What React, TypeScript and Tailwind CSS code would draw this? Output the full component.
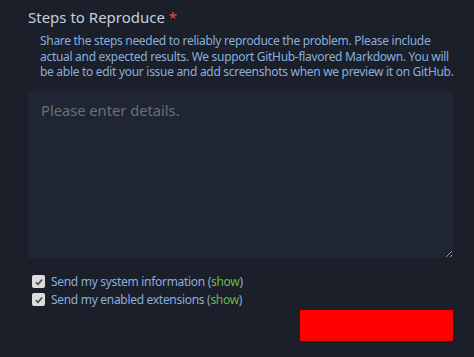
import React from "react";

const Check: React.FC = () => (
  <span className="flex h-[13px] w-[13px] items-center justify-center rounded-[2px] bg-[#dcdcdc]">
    <svg viewBox="0 0 12 12" className="h-[10px] w-[10px]">
      <path d="M2.2 6.3 L4.8 8.8 L9.8 3" fill="none" stroke="#4a4a4a" strokeWidth="2" />
    </svg>
  </span>
);

const App: React.FC = () => {
  return (
    <div className="h-[357px] w-[474px] bg-[#1b1f2a] font-['Noto_Sans',sans-serif]">
      <div className="pl-[28px] pr-[21px] pt-[6px]">
        <h2 className="text-[15px] leading-[22px] text-[#c5cfdf]">
          Steps to Reproduce <span className="text-[#e5484d]">*</span>
        </h2>
        <p className="mr-[-12px] mt-[5px] pl-[12px] text-[12px] leading-[15.5px] tracking-[-0.3px] text-[#8aaede]">
          Share the steps needed to reliably reproduce the problem. Please include actual and expected
          results. We support GitHub-flavored Markdown. You will be able to edit your issue and add
          screenshots when we preview it on GitHub.
        </p>
        <textarea
          className="mt-[11px] block h-[167px] w-[425px] resize-y bg-[#1f2533] px-[13px] py-[8px] text-[14.7px] text-[#c5cfdf] outline-none placeholder:text-[#6b7078]"
          placeholder="Please enter details."
        />
        <div className="mt-[15px] flex flex-col pl-[4px] text-[12px] leading-[18px] tracking-[-0.3px] text-[#8aaede]">
          <label className="flex items-center gap-[6px]">
            <Check />
            <span>
              Send my system information (<span className="text-[#6fb64a]">show</span>)
            </span>
          </label>
          <label className="flex items-center gap-[6px]">
            <Check />
            <span>
              Send my enabled extensions (<span className="text-[#6fb64a]">show</span>)
            </span>
          </label>
        </div>
        <div className="mt-[1px] flex justify-end">
          <div className="h-[31px] w-[153px] bg-[#ff0000]" />
        </div>
      </div>
    </div>
  );
};

export default App;
